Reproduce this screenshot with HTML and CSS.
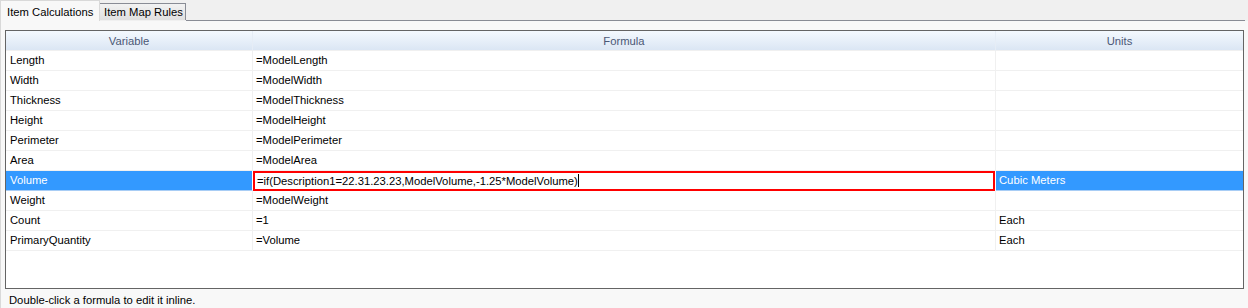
FILE: index.html
```html
<!DOCTYPE html>
<html>
<head>
<meta charset="utf-8">
<link rel="stylesheet" href="styles.css">
</head>
<body>
<div class="tabstrip">
  <div class="tab active">Item Calculations</div>
  <div class="tab inactive">Item Map Rules</div>
  <div class="tabfill"></div>
</div>
<div class="panel">
  <div class="grid">
    <div class="row head">
      <div class="cell c1">Variable</div>
      <div class="cell c2">Formula</div>
      <div class="cell c3">Units</div>
    </div>
    <div class="row"><div class="cell c1">Length</div><div class="cell c2">=ModelLength</div><div class="cell c3"></div></div>
    <div class="row"><div class="cell c1">Width</div><div class="cell c2">=ModelWidth</div><div class="cell c3"></div></div>
    <div class="row"><div class="cell c1">Thickness</div><div class="cell c2">=ModelThickness</div><div class="cell c3"></div></div>
    <div class="row"><div class="cell c1">Height</div><div class="cell c2">=ModelHeight</div><div class="cell c3"></div></div>
    <div class="row"><div class="cell c1">Perimeter</div><div class="cell c2">=ModelPerimeter</div><div class="cell c3"></div></div>
    <div class="row"><div class="cell c1">Area</div><div class="cell c2">=ModelArea</div><div class="cell c3"></div></div>
    <div class="row selected"><div class="cell c1">Volume</div><div class="cell c2 editing">=if(Description1=22.31.23.23,ModelVolume,-1.25*ModelVolume)<span class="caret"></span></div><div class="cell c3">Cubic Meters</div></div>
    <div class="row"><div class="cell c1">Weight</div><div class="cell c2">=ModelWeight</div><div class="cell c3"></div></div>
    <div class="row"><div class="cell c1">Count</div><div class="cell c2">=1</div><div class="cell c3">Each</div></div>
    <div class="row"><div class="cell c1">PrimaryQuantity</div><div class="cell c2">=Volume</div><div class="cell c3">Each</div></div>
  </div>
  <div class="status">Double-click a formula to edit it inline.</div>
</div>
</body>
</html>
```
FILE: styles.css
```css
html, body {
  margin: 0;
  padding: 0;
}
body {
  width: 1248px;
  height: 308px;
  overflow: hidden;
  background: #f0f0f0;
  font-family: "Liberation Sans", Arial, sans-serif;
  font-size: 11.25px;
  color: #000;
}
.tabstrip {
  display: flex;
  align-items: flex-end;
  height: 21px;
}
.tab {
  box-sizing: border-box;
  white-space: nowrap;
}
.tab.active {
  width: 100px;
  height: 21px;
  line-height: 22px;
  padding-left: 6px;
  background: #f8f8f8;
  border: 1px solid #d9d9d9;
  border-bottom: none;
  position: relative;
  z-index: 1;
}
.tab.inactive {
  width: 86px;
  height: 17px;
  line-height: 16px;
  padding-left: 4px;
  border: 1px solid #898c95;
  border-left: none;
  border-bottom: none;
  background: linear-gradient(#f2f2f2, #e0e0e0);
  margin-bottom: 1px;
}
.tabfill {
  flex: 1;
  height: 1px;
  background: #898c95;
  margin-right: 3px;
}
.panel {
  background: #f8f8f8;
  height: 287px;
  box-sizing: border-box;
  border-left: 1px solid #d9d9d9;
  padding: 9px 0 0 4px;
}
.grid {
  box-sizing: border-box;
  width: 1239px;
  height: 259px;
  border: 1px solid #646464;
  background: #fff;
}
.row {
  display: grid;
  grid-template-columns: 247px 743px 247px;
  height: 20px;
}
.cell {
  box-sizing: border-box;
  height: 20px;
  line-height: 19px;
  padding-left: 3px;
  white-space: nowrap;
  overflow: hidden;
  border-right: 1px solid #f0f0f0;
  border-bottom: 1px solid #f0f0f0;
}
.c1 { padding-left: 4px; }
.c3 { border-right: none; }
.head .cell {
  text-align: center;
  padding-left: 0;
  color: #4b5775;
  background: linear-gradient(#f4f9fe, #dbe6f4);
  border-right: 1px solid #e6edf6;
  border-bottom: 1px solid #f0f0f0;
  line-height: 20px;
}
.head .c3 { border-right: none; }
.selected .cell {
  background: #3399ff;
  color: #fff;
  border-bottom-color: #a8cdf5;
}
.selected .c1 {
  border-right: 1px solid #fff;
}
.selected .cell.editing {
  background: #fff;
  color: #000;
  border: 2px solid #ff0000;
  line-height: 16px;
  padding-left: 2px;
  width: 742px;
}
.caret {
  display: inline-block;
  width: 1px;
  height: 13px;
  background: #000;
  vertical-align: -2px;
}
.status {
  padding: 4px 0 0 4px;
  line-height: 14px;
}
```
